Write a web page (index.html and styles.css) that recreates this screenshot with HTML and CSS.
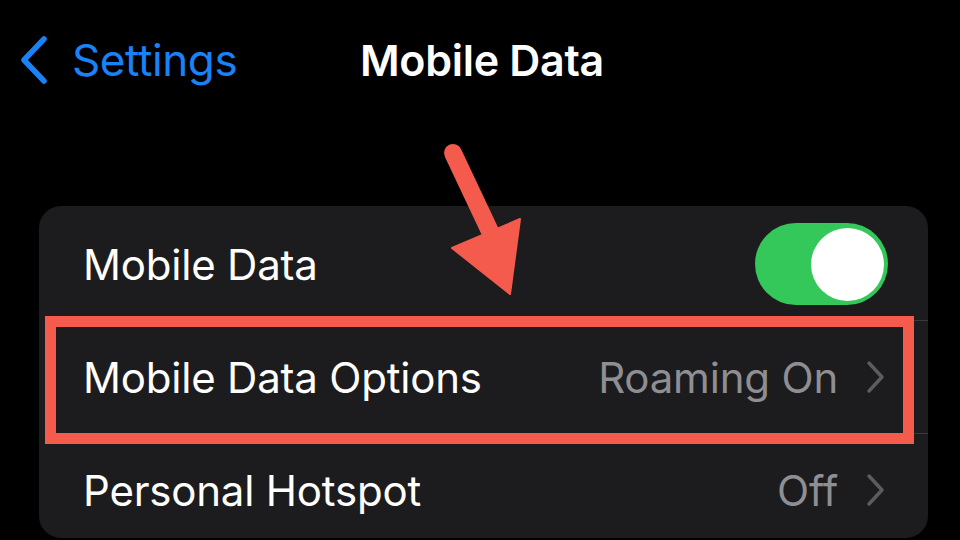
FILE: index.html
```html
<!DOCTYPE html>
<html>
<head>
<meta charset="utf-8">
<link rel="stylesheet" href="styles.css">
</head>
<body>
<div class="screen">
  <header class="nav">
    <div class="back">
      <svg class="back-icon" width="30" height="48" viewBox="0 0 30 48"><path d="M25 3 L5 24 L25 45" fill="none" stroke="#1a82f7" stroke-width="5.5" stroke-linecap="round" stroke-linejoin="round"/></svg>
      <span class="back-label">Settings</span>
    </div>
    <div class="title">Mobile Data</div>
    <div></div>
  </header>
  <section class="card">
    <div class="row first">
      <span class="label">Mobile Data</span>
      <span class="toggle"><span class="knob"></span></span>
    </div>
    <div class="row sep">
      <span class="label">Mobile Data Options</span>
      <span class="value">Roaming On</span>
      <svg class="chev" width="20" height="34" viewBox="0 0 20 34"><path d="M3 3 L16 17 L3 31" fill="none" stroke="#5b5b60" stroke-width="3.5" stroke-linecap="round" stroke-linejoin="round"/></svg>
    </div>
    <div class="row sep">
      <span class="label">Personal Hotspot</span>
      <span class="value">Off</span>
      <svg class="chev" width="20" height="34" viewBox="0 0 20 34"><path d="M3 3 L16 17 L3 31" fill="none" stroke="#5b5b60" stroke-width="3.5" stroke-linecap="round" stroke-linejoin="round"/></svg>
    </div>
  </section>
  <div class="highlight"></div>
  <svg class="arrow" width="120" height="170" viewBox="0 0 120 170"><path d="M20 21 L62 110" fill="none" stroke="#f45b4d" stroke-width="18" stroke-linecap="round"/><path d="M19 116 L87 87 L77 162 Z" fill="#f45b4d" stroke="#f45b4d" stroke-width="2" stroke-linejoin="round"/></svg>
</div>
</body>
</html>
```
FILE: styles.css
```css
html, body {
  margin: 0;
  padding: 0;
  background: #000;
}
.screen {
  position: relative;
  width: 960px;
  height: 540px;
  overflow: hidden;
  background: #000;
  font-family: Inter, "Noto Sans", sans-serif;
}
.nav {
  height: 120px;
  display: grid;
  grid-template-columns: 1fr auto 1fr;
  align-items: center;
}
.back {
  display: flex;
  align-items: center;
  padding-left: 19px;
  gap: 23px;
}
.back-icon {
  display: block;
}
.back-label {
  color: #1a82f7;
  font-size: 44px;
  letter-spacing: -0.4px;
}
.title {
  color: #fff;
  font-size: 43px;
  font-weight: 600;
  letter-spacing: -0.3px;
  padding-left: 4px;
}
.card {
  margin: 86px 32px 0 39px;
  background: #1c1c1e;
  border-radius: 22px;
  height: 332px;
  overflow: hidden;
  display: flex;
  flex-direction: column;
}
.row {
  flex: 0 0 auto;
  height: 113px;
  box-sizing: border-box;
  display: flex;
  align-items: center;
  padding: 0 42px 0 0;
  margin-left: 44px;
  color: #fff;
  font-size: 42px;
  letter-spacing: -0.2px;
}
.row.first {
  height: 114px;
  padding: 2px 40px 0 0;
}
.sep {
  border-top: 1px solid #39393c;
  height: 113px;
}
.label {
  flex: 1;
}
.value {
  color: #8e8e93;
  margin-right: 28px;
}
.chev {
  display: block;
}
.toggle {
  width: 133px;
  height: 82px;
  border-radius: 41px;
  background: #34c759;
  display: flex;
  align-items: center;
  justify-content: flex-end;
  padding-right: 4px;
  box-sizing: border-box;
}
.knob {
  width: 73px;
  height: 73px;
  border-radius: 50%;
  background: #fff;
}
.highlight {
  position: absolute;
  left: 45px;
  top: 316px;
  width: 869px;
  height: 128px;
  box-sizing: border-box;
  border: 11px solid #f45b4d;
}
.arrow {
  position: absolute;
  left: 433px;
  top: 132px;
}
```
